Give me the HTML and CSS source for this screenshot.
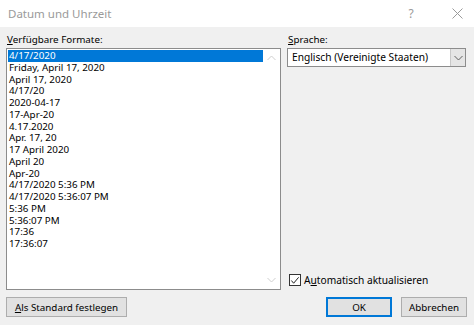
FILE: index.html
```html
<!DOCTYPE html>
<html lang="de">
<head>
<meta charset="utf-8">
<title>Datum und Uhrzeit</title>
<link rel="stylesheet" href="styles.css">
</head>
<body>
<div class="dialog">
  <header class="titlebar">
    <span class="title">Datum und Uhrzeit</span>
    <span class="help">?</span>
    <span class="close"><svg width="11" height="11" viewBox="0 0 11 11"><path d="M0.5 0.5 L10.5 10.5 M10.5 0.5 L0.5 10.5" stroke="#9a9a9a" stroke-width="1" fill="none"/></svg></span>
  </header>
  <main class="content">
    <div class="cols">
      <section class="left">
        <div class="label"><u>V</u>erfügbare Formate:</div>
        <div class="listbox">
          <ul class="items">
            <li class="selected">4/17/2020</li>
            <li>Friday, April 17, 2020</li>
            <li>April 17, 2020</li>
            <li>4/17/20</li>
            <li>2020-04-17</li>
            <li>17-Apr-20</li>
            <li>4.17.2020</li>
            <li>Apr. 17, 20</li>
            <li>17 April 2020</li>
            <li>April 20</li>
            <li>Apr-20</li>
            <li>4/17/2020 5:36 PM</li>
            <li>4/17/2020 5:36:07 PM</li>
            <li>5:36 PM</li>
            <li>5:36:07 PM</li>
            <li>17:36</li>
            <li>17:36:07</li>
          </ul>
          <div class="scrollbar">
            <svg width="9" height="6" viewBox="0 0 9 6"><path d="M0.5 5 L4.5 1 L8.5 5" stroke="#cfcfcf" stroke-width="1" fill="none"/></svg>
            <svg width="9" height="6" viewBox="0 0 9 6"><path d="M0.5 1 L4.5 5 L8.5 1" stroke="#cfcfcf" stroke-width="1" fill="none"/></svg>
          </div>
        </div>
      </section>
      <section class="right">
        <div class="label"><u>S</u>prache:</div>
        <div class="combo">
          <span class="combo-text">Englisch (Vereinigte Staaten)</span>
          <span class="combo-btn"><svg width="9" height="6" viewBox="0 0 9 6"><path d="M0.5 1 L4.5 5 L8.5 1" stroke="#606060" stroke-width="1" fill="none"/></svg></span>
        </div>
        <div class="check">
          <span class="box"><svg width="11" height="11" viewBox="0 0 11 11"><path d="M1.5 5.5 L4 8.5 L9.5 2" stroke="#222" stroke-width="1.1" fill="none"/></svg></span>
          <span>A<u>u</u>tomatisch aktualisieren</span>
        </div>
      </section>
    </div>
    <div class="footer">
      <button class="btn wide"><u>A</u>ls Standard festlegen</button>
      <div class="actions">
        <button class="btn default">OK</button>
        <button class="btn">Abbrechen</button>
      </div>
    </div>
  </main>
</div>
</body>
</html>
```
FILE: styles.css
```css
* { box-sizing: border-box; }
html, body { margin: 0; padding: 0; }
body {
  width: 474px;
  height: 325px;
  background: #f0f0f0;
  font-family: "Noto Sans", "Open Sans", sans-serif;
  font-size: 9.8px;
  color: #000;
  overflow: hidden;
}
.dialog { display: flex; flex-direction: column; height: 325px; }
.titlebar {
  height: 27px;
  background: #fff;
  display: flex;
  align-items: center;
  padding-left: 8px;
  color: #9a9a9a;
}
.title { font-size: 11.5px; flex: 1; }
.help { font-size: 12px; width: 46px; text-align: center; margin-right: 6px; }
.close { width: 34px; display: flex; justify-content: center; }
.content {
  flex: 1;
  padding: 6px 7px 0 6px;
  display: flex;
  flex-direction: column;
}
.cols { display: flex; gap: 6px; }
.label { height: 14px; line-height: 14px; margin-bottom: 1px; padding-left: 1px; }
.left { width: 275px; }
.listbox {
  height: 242px;
  border: 1px solid #8c8c8c;
  background: #fff;
  display: flex;
}
.items {
  list-style: none;
  margin: 0;
  padding: 1px 0 0 1px;
  flex: 1;
}
.items li {
  height: 11.75px;
  line-height: 11.75px;
  padding-left: 1px;
  white-space: nowrap;
}
.items li.selected { background: #0078d7; color: #fff; }
.scrollbar {
  width: 17px;
  display: flex;
  flex-direction: column;
  justify-content: space-between;
  align-items: center;
  padding: 6px 0 6px;
}
.right { flex: 1; display: flex; flex-direction: column; }
.combo {
  height: 19px;
  border: 1px solid #8c8c8c;
  background: #fff;
  display: flex;
  align-items: stretch;
  margin-right: 1px;
}
.combo-text { flex: 1; line-height: 17px; padding-left: 4px; white-space: nowrap; font-size: 10.2px; }
.combo-btn {
  width: 15px;
  background: #e5e5e5;
  border-left: 1px solid #c8c8c8;
  display: flex;
  align-items: center;
  justify-content: center;
}
.check {
  margin-top: auto;
  margin-bottom: 3px;
  display: flex;
  align-items: center;
  gap: 3px;
  padding-left: 2px;
  font-size: 10.2px;
}
.box {
  width: 12px;
  height: 12px;
  border: 1px solid #333;
  background: #fff;
  display: flex;
  align-items: center;
  justify-content: center;
}
.footer {
  margin-top: 7px;
  display: flex;
  justify-content: space-between;
}
.actions { display: flex; gap: 9px; }
.btn {
  font: inherit;
  color: #000;
  height: 20px;
  background: #e1e1e1;
  border: 1px solid #adadad;
  padding: 0;
  width: 66px;
}
.btn.wide { width: 121px; }
.btn.default { border-color: #0078d7; box-shadow: inset 0 0 0 1px #0078d7; }
```
